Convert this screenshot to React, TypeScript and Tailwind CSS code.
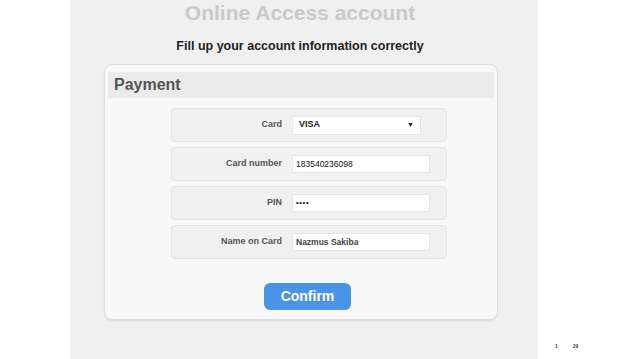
const font = { fontFamily: '"Liberation Sans", Arial, sans-serif' };

function Row({ label, children }: { label: string; children: React.ReactNode }) {
  return (
    <div className="flex h-[34px] items-center rounded-[4px] border border-[#e3e3e3] bg-[#f0f0f0]">
      <div className="w-[111px] pr-[1px] text-right text-[9px] font-bold text-[#555]">{label}</div>
      <div className="pl-[9px]">{children}</div>
    </div>
  );
}

export default function App() {
  return (
    <div className="flex h-[359px] w-[638px] bg-white" style={font}>
      <div className="ml-[70px] flex w-[468px] flex-col bg-[#f0f0f0]">
        <h1 className="mr-[8px] text-center text-[21px] leading-[26px] font-bold text-[#c9c9c9]">Online Access account</h1>
        <h2 className="mt-[12px] mr-[8px] text-center text-[12.5px] leading-[16px] font-bold text-[#222]">Fill up your account information correctly</h2>
        <div className="mt-[10px] ml-[34px] flex h-[256px] w-[394px] flex-col rounded-[8px] border border-[#dedede] bg-[#f8f8f8] shadow-[0_1px_2px_rgba(0,0,0,0.08)]">
          <div className="mx-[3px] mt-[7px] flex h-[26px] items-center bg-[#ebebeb] pl-[6px] text-[16px] font-bold text-[#555]">Payment</div>
          <div className="mt-[10px] ml-[66px] flex w-[276px] flex-col gap-[5px]">
            <Row label="Card">
              <div className="flex h-[19px] w-[129px] items-center justify-between border border-[#e5e5e5] bg-white px-[6px] text-[9px] font-bold text-[#222]">
                <span>VISA</span>
                <span className="text-[7px]">▼</span>
              </div>
            </Row>
            <Row label="Card number">
              <div className="flex h-[18px] w-[138px] items-center border border-[#e5e5e5] bg-white px-[3px] text-[8.5px] text-[#111]">183540236098</div>
            </Row>
            <Row label="PIN">
              <div className="flex h-[18px] w-[138px] items-center border border-[#e5e5e5] bg-white px-[3px] text-[8px] tracking-[0.5px] text-[#222]">••••</div>
            </Row>
            <Row label="Name on Card">
              <div className="flex h-[18px] w-[138px] items-center border border-[#e5e5e5] bg-white px-[3px] text-[8.5px] font-bold text-[#444]">Nazmus Sakiba</div>
            </Row>
          </div>
          <div className="mt-[24px] ml-[159px]">
            <button className="h-[27px] w-[87px] rounded-[6px] bg-[#4a94e8] text-[14px] font-bold text-white">Confirm</button>
          </div>
        </div>
      </div>
      <div className="flex flex-1 items-end pb-[9px] pl-[17px] text-[5px] font-bold text-[#444]">
        <span>1</span>
        <span className="ml-[15px]">29</span>
      </div>
    </div>
  );
}
